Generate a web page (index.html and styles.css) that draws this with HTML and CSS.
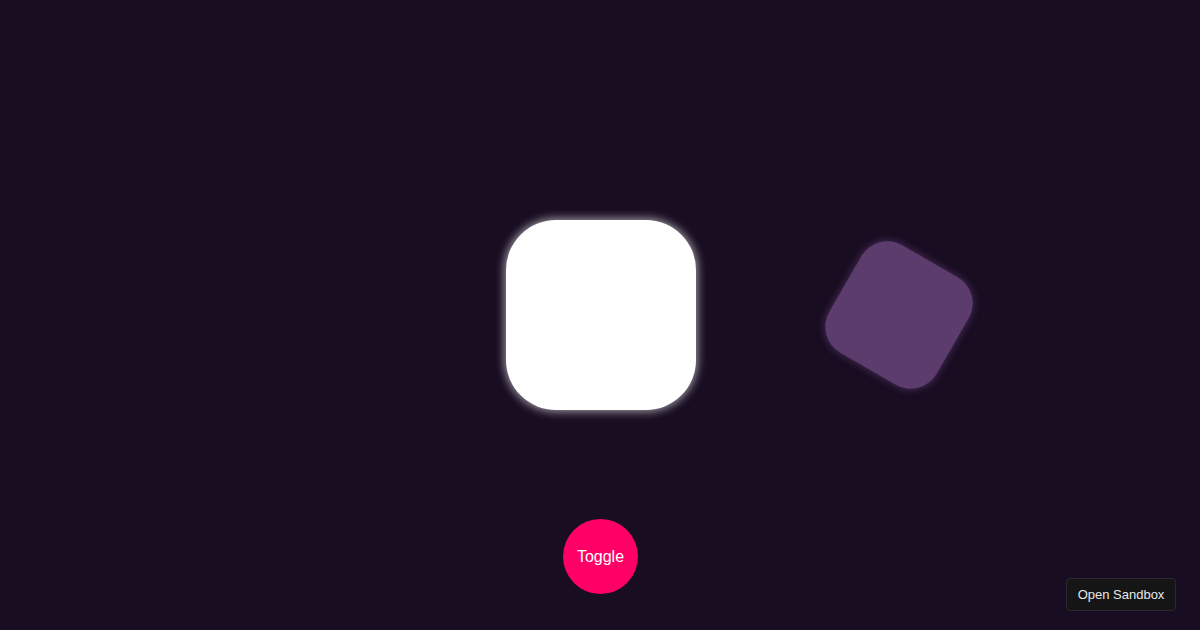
FILE: index.html
```html
<!DOCTYPE html>
<html>
<head>
<meta charset="utf-8">
<link rel="stylesheet" href="styles.css">
</head>
<body>
<main class="stage">
  <div class="box-wrap">
    <div class="box"></div>
    <div class="ghost"></div>
  </div>
  <button class="toggle">Toggle</button>
</main>
<a class="sandbox">Open Sandbox</a>
</body>
</html>
```
FILE: styles.css
```css
html, body {
  margin: 0;
  padding: 0;
  width: 100%;
  height: 100%;
  background: #190d22;
  overflow: hidden;
  font-family: "Liberation Sans", Arial, sans-serif;
}
.stage {
  position: relative;
  width: 100%;
  height: 100%;
  display: flex;
  align-items: center;
  justify-content: center;
}
.box-wrap {
  position: relative;
  width: 190px;
  height: 190px;
  margin-left: 1px;
}
.box {
  width: 190px;
  height: 190px;
  border-radius: 50px;
  background: #ffffff;
  box-shadow: 0 0 8px 2px rgba(255, 255, 255, 0.55);
}
.ghost {
  position: absolute;
  width: 124px;
  height: 124px;
  left: 331px;
  top: 33px;
  border-radius: 30px;
  background: #5c3b6d;
  transform: rotate(30deg);
  box-shadow: 0 0 6px 2px rgba(92, 59, 109, 0.5);
}
.toggle {
  position: absolute;
  left: 563px;
  top: 519px;
  width: 75px;
  height: 75px;
  border-radius: 50%;
  border: none;
  background: #ff0066;
  color: #ffffff;
  font-family: "Liberation Sans", Arial, sans-serif;
  font-size: 16px;
  padding: 0;
  cursor: pointer;
}
.sandbox {
  position: absolute;
  right: 24px;
  bottom: 19px;
  width: 110px;
  height: 33px;
  box-sizing: border-box;
  display: flex;
  align-items: center;
  justify-content: center;
  background: #151515;
  border: 1px solid #2a2a2e;
  border-radius: 4px;
  color: #e8e8e8;
  font-family: "Liberation Sans", Arial, sans-serif;
  font-size: 13px;
}
```
